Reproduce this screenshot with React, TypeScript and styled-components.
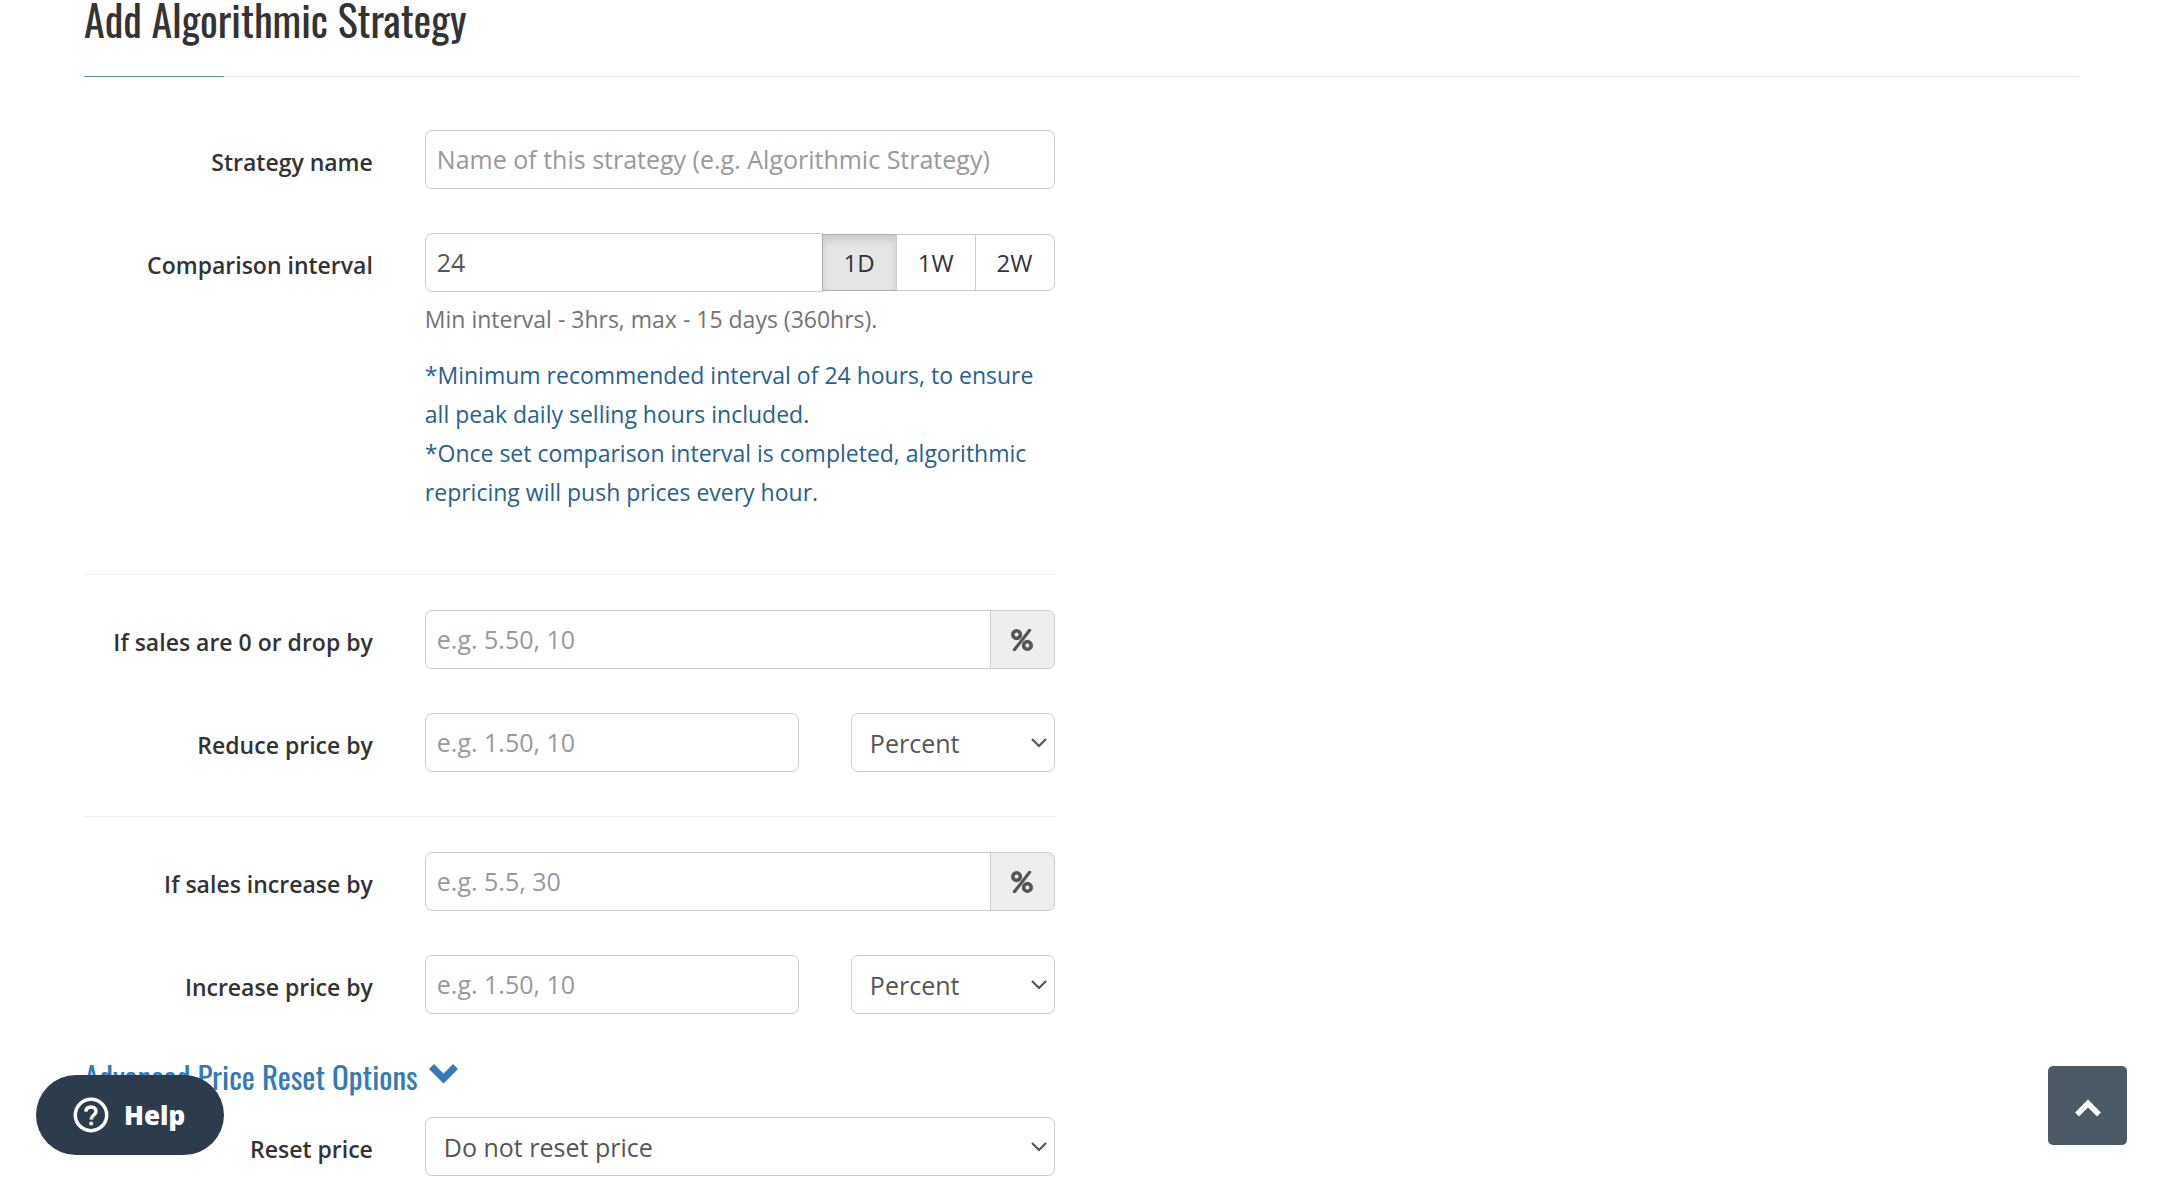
import React from "react";
import styled, { createGlobalStyle, css } from "styled-components";

const GlobalStyle = createGlobalStyle`
  *, *::before, *::after { box-sizing: border-box; }
  body {
    margin: 0;
    background: #fff;
    color: #333;
    font-family: "Open Sans", "Noto Sans", sans-serif;
    font-size: 23px;
    line-height: 38px;
  }
`;

const headingFont = `Oswald, "Roboto Condensed", "Open Sans Condensed", "Liberation Sans Narrow", sans-serif`;

const Page = styled.main`
  padding: 0 83px 3px 84px;
`;

const TitleBar = styled.header`
  display: flex;
  padding-bottom: 38px;
  border-bottom: 1px solid #e5e5e5;
  margin-bottom: 53px;
  position: relative;

  &::after {
    content: "";
    position: absolute;
    left: 0;
    bottom: -1px;
    width: 140px;
    height: 1px;
    background: #5f89a8;
  }
`;

const Title = styled.h1`
  margin: 0;
  font: 400 42px/38px ${headingFont};
`;

const Form = styled.form`
  width: calc(50% - 27px);
`;

const Row = styled.div`
  display: grid;
  grid-template-columns: calc((100% + 52px) / 3 - 52px) 1fr;
  column-gap: 52px;
  align-items: start;
  margin-bottom: 44px;
`;

const Label = styled.label`
  padding-top: 13px;
  text-align: right;
  font-weight: 600;
`;

const Split = styled.div`
  display: grid;
  grid-template-columns: calc((100% + 52px) * 5 / 8 - 52px) 1fr;
  column-gap: 52px;
`;

const Group = styled.div`
  display: flex;
  align-items: center;
`;

const control = css`
  display: block;
  width: 100%;
  min-width: 0;
  height: 59px;
  border: 1px solid #ccc;
  border-radius: 7px;
  background: #fff;
  color: #555;
  font: 400 25px/36px "Open Sans", "Noto Sans", sans-serif;
`;

const Input = styled.input<{ $joined?: boolean }>`
  ${control}
  padding: 0 11px 1px;
  ${(p) => p.$joined && "flex: 1; border-radius: 7px 0 0 7px;"}
  &::placeholder { color: #999; opacity: 1; }
`;

const SelectBox = styled.div`
  position: relative;
`;

const Select = styled.select`
  ${control}
  appearance: none;
  padding: 0 40px 0 18px;
`;

const SelectArrow = styled.svg`
  position: absolute;
  right: 8px;
  top: 24px;
  width: 16px;
  height: 11px;
  pointer-events: none;
`;

const Addon = styled.span`
  display: flex;
  align-items: center;
  justify-content: center;
  width: 65px;
  height: 59px;
  margin-left: -1px;
  border: 1px solid #ccc;
  border-radius: 0 7px 7px 0;
  background: #eee;
`;

const IntervalButton = styled.button<{ $active?: boolean }>`
  height: 57px;
  margin-left: -1px;
  padding: 0 21px;
  border: 1px solid #ccc;
  background: #fff;
  color: #333;
  font: 400 24px/36px "Open Sans", "Noto Sans", sans-serif;
  &:last-child { border-radius: 0 7px 7px 0; }
  ${(p) =>
    p.$active &&
    css`
      border-color: #adadad;
      background: #e6e6e6;
      box-shadow: inset 0 5px 9px rgba(0, 0, 0, 0.125);
    `}
`;

const Hint = styled.p`
  margin: 8px 0 18px;
  color: #737373;
`;

const Notes = styled.p`
  margin: 0 0 18px;
  color: #286090;
  line-height: 39px;
`;

const Divider = styled.hr`
  height: 1px;
  margin: 0 0 35px;
  border: 0;
  background: #eee;
`;

const Toggle = styled.button`
  display: flex;
  align-items: center;
  gap: 11px;
  margin: 0 0 23px;
  padding: 0;
  border: 0;
  background: none;
  color: #337ab7;
  font: 400 31px/36px ${headingFont};
  white-space: nowrap;
`;

const ToggleIcon = styled.svg`
  margin-bottom: 4px;
`;

const HelpButton = styled.button`
  position: fixed;
  left: 36px;
  bottom: 25px;
  display: flex;
  align-items: center;
  gap: 15px;
  height: 80px;
  padding: 0 39px 0 37px;
  border: 0;
  border-radius: 40px;
  background: #2d3c4c;
  color: #fff;
  font: 800 26px/36px "Open Sans", "Noto Sans", sans-serif;
`;

const TopButton = styled.button`
  position: fixed;
  right: 35px;
  bottom: 35px;
  display: flex;
  align-items: center;
  justify-content: center;
  width: 79px;
  height: 79px;
  padding: 5px 0 0;
  border: 0;
  border-radius: 5px;
  background: #4b5a67;
`;

function PercentAddon() {
  return (
    <Addon>
      <svg width="22" height="22" viewBox="0 0 22 22" fill="none" stroke="#555" strokeWidth="3.6" role="img" aria-label="percent">
        <circle cx="5.6" cy="5.6" r="3.8" />
        <circle cx="16.4" cy="16.4" r="3.8" />
        <path d="M18.6 1.2 3.4 20.8" strokeWidth="3.2" strokeLinecap="round" />
      </svg>
    </Addon>
  );
}

function SelectField({ id, label, option }: { id: string; label?: string; option: string }) {
  return (
    <SelectBox>
      <Select id={id} aria-label={label}>
        <option>{option}</option>
      </Select>
      <SelectArrow viewBox="0 0 16 11" fill="none" stroke="#555" strokeWidth="2.2">
        <path d="M1 2 8 9 15 2" />
      </SelectArrow>
    </SelectBox>
  );
}

function ThresholdRow({ id, label, placeholder }: { id: string; label: string; placeholder: string }) {
  return (
    <Row>
      <Label htmlFor={id}>{label}</Label>
      <Group>
        <Input id={id} $joined placeholder={placeholder} />
        <PercentAddon />
      </Group>
    </Row>
  );
}

function PriceRow({ id, label, placeholder }: { id: string; label: string; placeholder: string }) {
  return (
    <Row>
      <Label htmlFor={id}>{label}</Label>
      <Split>
        <Input id={id} placeholder={placeholder} />
        <SelectField id={`${id}-unit`} label={`${label} unit`} option="Percent" />
      </Split>
    </Row>
  );
}

export default function App() {
  const [hours, setHours] = React.useState("24");
  const intervals = [
    { name: "1D", hours: "24" },
    { name: "1W", hours: "168" },
    { name: "2W", hours: "336" },
  ];

  return (
    <>
      <GlobalStyle />
      <Page>
        <TitleBar>
          <Title>Add Algorithmic Strategy</Title>
        </TitleBar>
        <Form onSubmit={(e) => e.preventDefault()}>
          <Row>
            <Label htmlFor="name">Strategy name</Label>
            <Input id="name" placeholder="Name of this strategy (e.g. Algorithmic Strategy)" />
          </Row>
          <Row>
            <Label htmlFor="interval">Comparison interval</Label>
            <div>
              <Group>
                <Input id="interval" $joined value={hours} onChange={(e) => setHours(e.target.value)} />
                {intervals.map((i) => (
                  <IntervalButton key={i.name} type="button" $active={hours === i.hours} onClick={() => setHours(i.hours)}>
                    {i.name}
                  </IntervalButton>
                ))}
              </Group>
              <Hint>Min interval - 3hrs, max - 15 days (360hrs).</Hint>
              <Notes>
                *Minimum recommended interval of 24 hours, to ensure all peak daily selling hours included.
                <br />
                *Once set comparison interval is completed, algorithmic repricing will push prices every hour.
              </Notes>
            </div>
          </Row>
          <Divider />
          <ThresholdRow id="drop" label="If sales are 0 or drop by" placeholder="e.g. 5.50, 10" />
          <PriceRow id="reduce" label="Reduce price by" placeholder="e.g. 1.50, 10" />
          <Divider />
          <ThresholdRow id="rise" label="If sales increase by" placeholder="e.g. 5.5, 30" />
          <PriceRow id="increase" label="Increase price by" placeholder="e.g. 1.50, 10" />
          <Toggle type="button">
            Advanced Price Reset Options
            <ToggleIcon width="29" height="20" viewBox="0 0 29 20" fill="#337ab7">
              <path d="M5 0 14.500 9.500 24 0 29 5 14.500 19.500 0 5Z" />
            </ToggleIcon>
          </Toggle>
          <Row>
            <Label htmlFor="reset">Reset price</Label>
            <SelectField id="reset" option="Do not reset price" />
          </Row>
        </Form>
      </Page>
      <HelpButton type="button">
        <svg width="36" height="36" viewBox="0 0 36 36" fill="none" stroke="#fff" strokeWidth="3.500">
          <circle cx="18" cy="18" r="15.700" />
          <path d="M12.800 14.600c.2-3 2.300-4.600 5.200-4.600 3 0 5 1.700 5 4.400 0 3.700-4.800 3.600-4.800 8" strokeLinecap="butt" />
          <circle cx="18.200" cy="26.500" r="2" fill="#fff" stroke="none" />
        </svg>
        Help
      </HelpButton>
      <TopButton type="button" aria-label="Back to top">
        <svg width="26" height="18" viewBox="0 0 26 18" fill="none" stroke="#fff" strokeWidth="5.500">
          <path d="M2 15.500 13 4.500 24 15.500" strokeLinejoin="miter" />
        </svg>
      </TopButton>
    </>
  );
}
